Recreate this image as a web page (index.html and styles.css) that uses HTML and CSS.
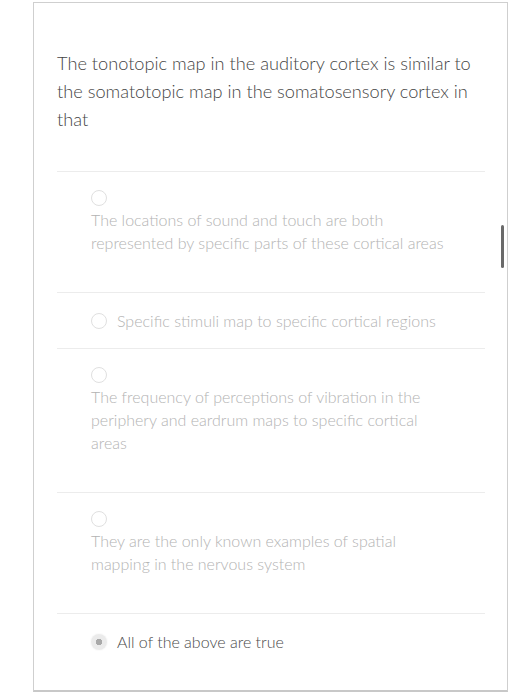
FILE: index.html
```html
<!DOCTYPE html>
<html>
<head>
<meta charset="utf-8">
<link rel="stylesheet" href="styles.css">
</head>
<body>
<div class="card">
  <p class="question">The tonotopic map in the auditory cortex is similar to the somatotopic map in the somatosensory cortex in that</p>
  <ul class="options">
    <li class="opt stacked"><span class="radio"></span><span class="label">The locations of sound and touch are both represented by specific parts of these cortical areas</span></li>
    <li class="opt inline"><span class="radio"></span><span class="label">Specific stimuli map to specific cortical regions</span></li>
    <li class="opt stacked"><span class="radio"></span><span class="label">The frequency of perceptions of vibration in the periphery and eardrum maps to specific cortical areas</span></li>
    <li class="opt stacked"><span class="radio"></span><span class="label">They are the only known examples of spatial mapping in the nervous system</span></li>
    <li class="opt inline selected"><span class="radio"></span><span class="label">All of the above are true</span></li>
  </ul>
</div>
<div class="scrollbar"></div>
</body>
</html>
```
FILE: styles.css
```css
html, body {
  margin: 0;
  padding: 0;
  background: #ffffff;
}
body {
  font-family: Lato, "Open Sans", sans-serif;
  font-weight: 300;
  width: 508px;
  height: 700px;
  overflow: hidden;
}
.card {
  box-sizing: border-box;
  margin: 2px 0 0 33px;
  width: 475px;
  height: 690px;
  border: 1px solid #cfcfcf;
  border-bottom: 2px solid #c8c8c8;
  padding: 46px 22px 0 23px;
}
.question {
  margin: 0;
  font-size: 18.2px;
  line-height: 28px;
  color: #454545;
}
.options {
  list-style: none;
  margin: 38px 0 0 0;
  padding: 0;
}
.opt {
  border-top: 1px solid #ececec;
  padding: 16px 34px 16px 34px;
  font-size: 16px;
  line-height: 23px;
  color: #b3b3b3;
}
.opt .label {
  max-width: 359px;
}
.opt.stacked {
  display: flex;
  flex-direction: column;
  align-items: flex-start;
  padding-bottom: 38px;
}
.opt.stacked .radio {
  margin: 2px 0 2px 0;
}
.opt.inline {
  display: flex;
  align-items: center;
  gap: 10px;
}
.radio {
  box-sizing: border-box;
  display: inline-block;
  width: 16px;
  height: 16px;
  border-radius: 50%;
  border: 1px solid #e0e0e0;
  background: #fff;
  flex: none;
}
.opt.selected {
  color: #4a4a4a;
}
.opt.selected .radio {
  border: none;
  background: radial-gradient(circle, #a9a9a9 0 3px, #ebebeb 3.5px);
  box-shadow: 0 0 2px rgba(0,0,0,0.08);
}
.scrollbar {
  position: absolute;
  left: 501px;
  top: 225px;
  width: 3px;
  height: 43px;
  border-radius: 2px;
  background: #6a6a6a;
}
```
